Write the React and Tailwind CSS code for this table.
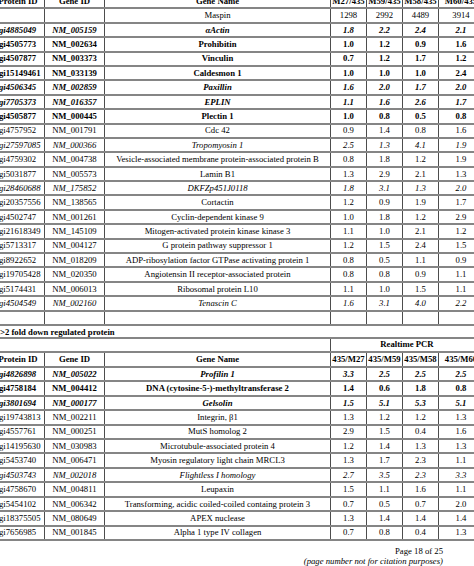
import React from "react";

// row styles: n normal, b bold, i italic, bi bold italic
const FACE = {
  n: "",
  b: "font-bold",
  i: "italic",
  bi: "font-bold italic",
};

const COLS = "grid-cols-[53px_60px_226px_36px_36px_36px_44px]";

const upRows = [
  ["bi", "gi4885049", "NM_005159", "αActin", "1.8", "2.2", "2.4", "2.1"],
  ["b", "gi4505773", "NM_002634", "Prohibitin", "1.0", "1.2", "0.9", "1.6"],
  ["b", "gi4507877", "NM_003373", "Vinculin", "0.7", "1.2", "1.7", "1.2"],
  ["b", "gi15149461", "NM_033139", "Caldesmon 1", "1.0", "1.0", "1.0", "2.4"],
  ["bi", "gi4506345", "NM_002859", "Paxillin", "1.6", "2.0", "1.7", "2.0"],
  ["bi", "gi7705373", "NM_016357", "EPLIN", "1.1", "1.6", "2.6", "1.7"],
  ["b", "gi4505877", "NM_000445", "Plectin 1", "1.0", "0.8", "0.5", "0.8"],
  ["n", "gi4757952", "NM_001791", "Cdc 42", "0.9", "1.4", "0.8", "1.6"],
  ["i", "gi27597085", "NM_000366", "Tropomyosin 1", "2.5", "1.3", "4.1", "1.9"],
  ["n", "gi4759302", "NM_004738", "Vesicle-associated membrane protein-associated protein B", "0.8", "1.8", "1.2", "1.9"],
  ["n", "gi5031877", "NM_005573", "Lamin B1", "1.3", "2.9", "2.1", "1.3"],
  ["i", "gi28460688", "NM_175852", "DKFZp451J0118", "1.8", "3.1", "1.3", "2.0"],
  ["n", "gi20357556", "NM_138565", "Cortactin", "1.2", "0.9", "1.9", "1.7"],
  ["n", "gi4502747", "NM_001261", "Cyclin-dependent kinase 9", "1.0", "1.8", "1.2", "2.9"],
  ["n", "gi21618349", "NM_145109", "Mitogen-activated protein kinase kinase 3", "1.1", "1.0", "2.1", "1.2"],
  ["n", "gi5713317", "NM_004127", "G protein pathway suppressor 1", "1.2", "1.5", "2.4", "1.5"],
  ["n", "gi8922652", "NM_018209", "ADP-ribosylation factor GTPase activating protein 1", "0.8", "0.5", "1.1", "0.9"],
  ["n", "gi19705428", "NM_020350", "Angiotensin II receptor-associated protein", "0.8", "0.8", "0.9", "1.1"],
  ["n", "gi5174431", "NM_006013", "Ribosomal protein L10", "1.1", "1.0", "1.5", "1.1"],
  ["i", "gi4504549", "NM_002160", "Tenascin C", "1.6", "3.1", "4.0", "2.2"],
];

const downRows = [
  ["bi", "gi4826898", "NM_005022", "Profilin 1", "3.3", "2.5", "2.5", "2.5"],
  ["b", "gi4758184", "NM_004412", "DNA (cytosine-5-)-methyltransferase 2", "1.4", "0.6", "1.8", "0.8"],
  ["bi", "gi3801694", "NM_000177", "Gelsolin", "1.5", "5.1", "5.3", "5.1"],
  ["n", "gi19743813", "NM_002211", "Integrin, β1", "1.3", "1.2", "1.2", "1.3"],
  ["n", "gi4557761", "NM_000251", "MutS homolog 2", "2.9", "1.5", "0.4", "1.6"],
  ["n", "gi14195630", "NM_030983", "Microtubule-associated protein 4", "1.2", "1.4", "1.3", "1.3"],
  ["n", "gi5453740", "NM_006471", "Myosin regulatory light chain MRCL3", "1.3", "1.7", "2.3", "1.1"],
  ["i", "gi4503743", "NM_002018", "Flightless I homology", "2.7", "3.5", "2.3", "3.3"],
  ["n", "gi4758670", "NM_004811", "Leupaxin", "1.5", "1.1", "1.6", "1.1"],
  ["n", "gi5454102", "NM_006342", "Transforming, acidic coiled-coiled containg protein 3", "0.7", "0.5", "0.7", "2.0"],
  ["n", "gi18375505", "NM_080649", "APEX nuclease", "1.3", "1.4", "1.4", "1.4"],
  ["n", "gi7656985", "NM_001845", "Alpha 1 type IV collagen", "0.7", "0.8", "0.4", "1.3"],
];

function Row({ cells, face = "n", height = "h-[14.4px]" }) {
  const [pid, gid, name, ...nums] = cells;
  return (
    <div className={`grid ${COLS} ${height} border-b-2 border-[#858585] ${FACE[face]}`}>
      <div className="flex items-center pl-[7px] border-r border-[#4d4d4d] whitespace-nowrap">{pid}</div>
      <div className="flex items-center justify-center border-r border-[#4d4d4d] whitespace-nowrap">{gid}</div>
      <div className="flex items-center justify-center border-r border-[#4d4d4d] whitespace-nowrap">{name}</div>
      {nums.map((v, i) => (
        <div
          key={i}
          className={`flex items-center justify-center whitespace-nowrap ${i < 3 ? "border-r border-[#4d4d4d]" : ""}`}
        >
          {v}
        </div>
      ))}
    </div>
  );
}

function HeadRow({ labels, height }) {
  const [pid, ...rest] = labels;
  return (
    <div className={`grid ${COLS} ${height} border-b-2 border-[#858585] font-bold`}>
      <div className="flex items-center justify-center border-r border-[#4d4d4d] whitespace-nowrap">{pid}</div>
      {rest.map((v, i) => (
        <div
          key={i}
          className={`flex items-center justify-center whitespace-nowrap ${i < 5 ? "border-r border-[#4d4d4d]" : ""}`}
        >
          {v}
        </div>
      ))}
    </div>
  );
}

export default function App() {
  return (
    <div
      className="w-[474px] h-[566px] overflow-hidden bg-white text-black text-[8.7px] leading-none"
      style={{ fontFamily: '"Liberation Serif", "Times New Roman", serif' }}
    >
      {/* up regulated table, header cut by the page edge */}
      <div className="-mt-[5px] -ml-[8px] w-[491px]">
        <HeadRow
          labels={["Protein ID", "Gene ID", "Gene Name", "M27/435", "M59/435", "M58/435", "M60/435"]}
          height="h-[14.4px]"
        />
        <Row cells={["", "", "Maspin", "1298", "2992", "4489", "3914"]} />
        {upRows.map(([face, ...cells]) => (
          <Row key={cells[0]} face={face} cells={cells} />
        ))}
        <Row cells={["", "", "", "", "", "", ""]} />
      </div>

      <div className="h-[10.8px] flex items-end font-bold whitespace-nowrap">
        &gt;2 fold down regulated protein
      </div>

      <div className="-ml-[8px] w-[491px] border-t-2 border-[#858585]">
        <div className={`grid ${COLS} h-[14px] border-b-2 border-[#858585] font-bold`}>
          <div className="col-span-3 border-r border-[#4d4d4d]" />
          <div className="col-span-4 flex items-center justify-center whitespace-nowrap">Realtime PCR</div>
        </div>
        <HeadRow
          labels={["Protein ID", "Gene ID", "Gene Name", "435/M27", "435/M59", "435/M58", "435/M60"]}
          height="h-[15px]"
        />
        {downRows.map(([face, ...cells]) => (
          <Row key={cells[0]} face={face} cells={cells} height="h-[14.45px]" />
        ))}
      </div>

      <div className="mt-[5px] pr-[31px] text-right leading-[10px]">
        <div>Page 18 of 25</div>
        <div className="italic">(page number not for citation purposes)</div>
      </div>
    </div>
  );
}
